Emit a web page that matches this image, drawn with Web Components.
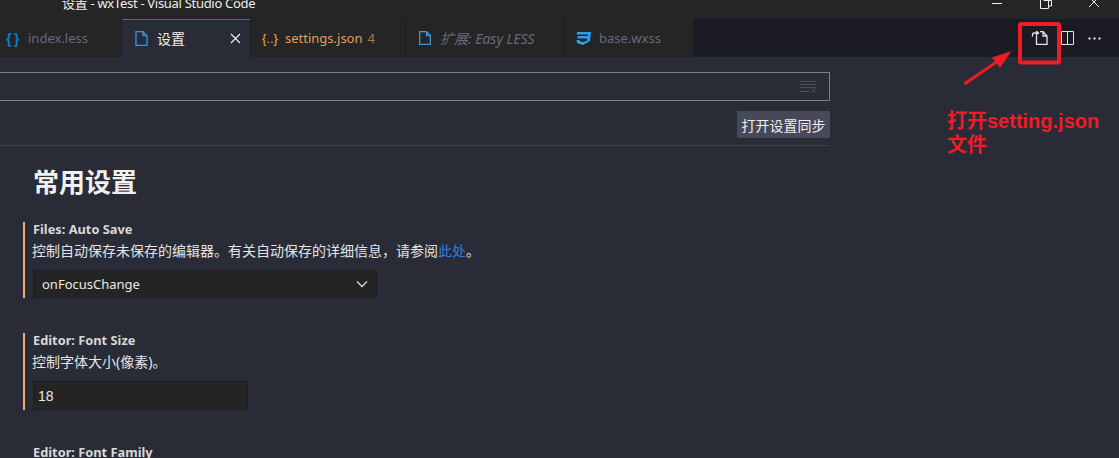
<!DOCTYPE html>
<html lang="zh"><head><meta charset="utf-8"><title>设置 - wxTest - Visual Studio Code</title>
<style>
html,body{margin:0;padding:0;background:#292b37;width:1119px;height:458px;overflow:hidden}
body{font-family:"Noto Sans","Noto Sans CJK SC",sans-serif;position:relative}
</style></head><body>
<template id="t-titlebar"><style>
:host{display:flex;flex:none;height:19px;background:#252525;overflow:hidden;color:#eee;font-size:13px;line-height:16px;position:relative}
.t{margin:-5px 0 0 62px;white-space:nowrap;flex:1;letter-spacing:-.3px}
.c{display:flex;margin-right:19px;gap:36px;align-items:flex-start}
svg{display:block;fill:none;stroke:#eee;stroke-width:1}
</style><div class="t"><slot></slot></div>
<div class="c">
<svg width="12" height="8"><path d="M0 3.5H10"/></svg>
<svg width="12" height="10"><path d="M.5 -2V8.5H8.5V-2M3.5 .5H11.5V6H8.5" /></svg>
<svg width="12" height="10"><path d="M1 -3L11 7M11 -3L1 7"/></svg>
</div></template>

<template id="t-tab"><style>
:host{display:flex;align-items:center;box-sizing:border-box;height:38px;background:#252525;font-size:13px;color:#666a78;border-right:1px solid #1a1b24;white-space:nowrap;padding-left:6px;flex:none}
:host([active]){background:#292b37;color:#eee;box-shadow:inset 0 1px 0 #8b4d7f;padding-left:13px;position:relative;font-size:14px}
:host([modified]){color:#e0a05c}
:host([preview]){font-style:italic;font-size:14px}
.i{display:flex;align-items:center;justify-content:center;flex:none}
.c{margin-left:auto;margin-right:9px;display:flex}
</style><span class="i"><slot name="icon"></slot></span><slot></slot><span class="c"><slot name="close"></slot></span></template>

<template id="t-tabbar"><style>
:host{display:flex;flex:none;height:38px;background:#1a1b24;align-items:stretch}
.a{margin-left:auto;display:flex;align-items:center;margin-right:18px}
</style><slot></slot><div class="a"><slot name="actions"></slot></div></template>

<template id="t-search"><style>
:host{display:flex;align-items:center;justify-content:flex-end;box-sizing:border-box;height:29px;border:1px solid #7d7d88;margin-left:-10px;padding-right:13px}
</style><slot></slot></template>

<template id="t-button"><style>
:host{display:flex;align-items:center;justify-content:center;height:27px;width:93px;background:#474959;color:#eee;font-size:14px;box-sizing:border-box}
</style><slot></slot></template>

<template id="t-setting"><style>
:host{display:block;flex:none;border-left:2px solid #f0ad63;padding-left:8px;margin-left:23px;color:#ddd}
:host([plain]){border-left-color:transparent}
.l{font-size:12.8px;font-weight:700;line-height:14px;color:#d8d8d8}
.d{font-size:14px;line-height:20px;margin-top:5px;color:#e4e4e4;height:20px;white-space:nowrap;margin-left:-1px}
.v{margin-top:9px}
</style><div class="l"><slot name="label"></slot></div><div class="d"><slot name="desc"></slot></div><div class="v"><slot></slot></div></template>

<template id="t-select"><style>
:host{display:flex;align-items:center;justify-content:space-between;box-sizing:border-box;width:344px;height:28px;background:#242424;border:1px solid #1c1d27;color:#e8e8e8;font-size:13px;padding:0 8px 0 8px}
</style><slot></slot><svg width="12" height="12" viewBox="0 0 12 12" fill="none" stroke="#ddd" stroke-width="1.3"><path d="M1 3.5L6 8.5L11 3.5"/></svg></template>

<template id="t-number"><style>
:host{display:flex;align-items:center;box-sizing:border-box;width:215px;height:29px;background:#242424;border:1px solid #1c1d27;color:#e8e8e8;font:14px "Liberation Sans",sans-serif;padding-left:4px}
</style><slot></slot></template>

<template id="t-app"><style>
:host{display:flex;flex-direction:column;width:1119px;height:458px;overflow:hidden;background:#292b37}
.main{width:830px;display:flex;flex-direction:column;flex:none}
.search{padding-top:15px}
.btn{display:flex;justify-content:flex-end;margin-top:10px}
.rule{height:1px;background:#3e404c;margin:7px 0 0 -10px}
h1{margin:17px 0 0 33px;font-size:26px;line-height:38px;font-weight:700;color:#f0f0f0}
.s{display:flex;flex-direction:column;gap:35px;margin-top:21px}
</style><slot name="title"></slot><slot name="tabs"></slot>
<div class="main"><div class="search"><slot name="search"></slot></div><div class="btn"><slot name="button"></slot></div><div class="rule"></div>
<h1><slot name="heading"></slot></h1><div class="s"><slot></slot></div></div></template>

<template id="t-callout"><style>
:host{display:block;position:absolute;left:0;top:0;width:1119px;height:458px;pointer-events:none}
svg{position:absolute;left:0;top:0}
.x{position:absolute;left:947px;top:109px;width:170px;color:#ee1c25;font:700 20px/24px "Liberation Sans","Noto Sans CJK SC",sans-serif}
</style><svg width="1119" height="458" fill="none"><rect x="1020" y="24" width="39" height="38.5" rx="1" stroke="#ee1c25" stroke-width="4"/>
<path d="M964.5 84L1000 59.5" stroke="#ee1c25" stroke-width="3"/><path d="M1011.5 51L992 57.5L1000 68Z" fill="#ee1c25"/></svg><div class="x"><slot></slot></div></template>

<script>
for (const [tag,id] of [['vs-titlebar','t-titlebar'],['vs-tab','t-tab'],['vs-tabbar','t-tabbar'],['vs-search','t-search'],['vs-button','t-button'],['vs-setting','t-setting'],['vs-select','t-select'],['vs-number','t-number'],['vs-app','t-app'],['vs-callout','t-callout']]) {
  customElements.define(tag, class extends HTMLElement {
    constructor(){super();this.attachShadow({mode:'open'}).appendChild(document.getElementById(id).content.cloneNode(true));}
  });
}
</script>

<vs-app>
<vs-titlebar slot="title">设置 - wxTest - Visual Studio Code</vs-titlebar>
<vs-tabbar slot="tabs">
<vs-tab style="width:122px"><span slot="icon" style="width:22px;color:#0a7cc1;font:bold 15px 'Liberation Sans',sans-serif;letter-spacing:2px">{}</span><span>index.less</span></vs-tab>
<vs-tab active style="width:129px"><svg slot="icon" width="13" height="15" viewBox="0 0 13 15" fill="none" stroke="#3b94e0" stroke-width="1.3"><path d="M1 .7H8L12 4.7V14.3H1ZM8 .7V4.7H12"/></svg><span style="margin-left:9px">设置</span><svg slot="close" width="11" height="11" fill="none" stroke="#eee" stroke-width="1.2"><path d="M1 1L10 10M10 1L1 10"/></svg></vs-tab>
<vs-tab modified style="width:155px"><span slot="icon" style="width:23px;margin-left:5px;color:#e2b53a;font:13px 'Liberation Sans',sans-serif">{..}</span><span>settings.json</span><span style="margin-left:5px;color:#a87a4d">4</span></vs-tab>
<vs-tab preview style="width:158px;padding-left:13px"><svg slot="icon" width="12" height="14" viewBox="0 0 12 14" fill="none" stroke="#3b94e0" stroke-width="1.3"><path d="M.7 .7H7.5L11.3 4.5V13.3H.7ZM7.5 .7V4.500H11.300"/></svg><span style="margin-left:9px">扩展: Easy LESS</span></vs-tab>
<vs-tab style="width:129px;padding-left:12px;border-right:0"><svg slot="icon" width="15" height="13" viewBox="0 0 15 13"><path fill="#2f9bea" d="M1 0H15L14 9L7 13L1 11L.6 8H3.6L4 9.200L7 10L11 8.800L11.300 6.500H1.300L1.700 4H11.700L12 2.500H.7Z"/></svg><span style="margin-left:8px">base.wxss</span></vs-tab>
<span slot="actions" style="display:flex;align-items:center">
<svg width="17" height="14" viewBox="0 0 17 14" fill="none" stroke="#e4e4e4" stroke-width="1.3"><path d="M5.500 4.500V13.500H16V5L12 .5H9M12 .5V5H16M1.500 5.500V3.500Q1.500 2 3 2H7M5 0L7.500 2L5 4"/></svg>
<svg style="margin-left:13px" width="13" height="14" viewBox="0 0 13 14" fill="none" stroke="#e4e4e4"><path d="M.5 .5H12.500V13.500H.5ZM6.500 .5V13.500"/></svg>
<svg style="margin-left:14px" width="13" height="3" viewBox="0 0 13 3" fill="#ccc"><circle cx="1.500" cy="1.500" r="1.200"/><circle cx="6.500" cy="1.500" r="1.200"/><circle cx="11.500" cy="1.500" r="1.200"/></svg>
</span>
</vs-tabbar>
<vs-search slot="search"><svg width="16" height="12" viewBox="0 0 16 12" stroke="#4c4e5a" fill="none"><path d="M0 .5H16M0 3.500H16M0 6.500H16M0 10.500H10M11.500 7.500L15.500 11.500M15.500 7.500L11.500 11.500"/></svg></vs-search>
<vs-button slot="button">打开设置同步</vs-button>
<span slot="heading">常用设置</span>
<vs-setting><span slot="label">Files: Auto Save</span><span slot="desc">控制自动保存未保存的编辑器。有关自动保存的详细信息，请参阅<span style="color:#2f7fe0">此处</span>。</span><vs-select>onFocusChange</vs-select></vs-setting>
<vs-setting><span slot="label">Editor: Font Size</span><span slot="desc">控制字体大小(像素)。</span><vs-number>18</vs-number></vs-setting>
<vs-setting plain><span slot="label">Editor: Font Family</span></vs-setting>
</vs-app>
<vs-callout>打开setting.json<br>文件</vs-callout>
</body></html>
